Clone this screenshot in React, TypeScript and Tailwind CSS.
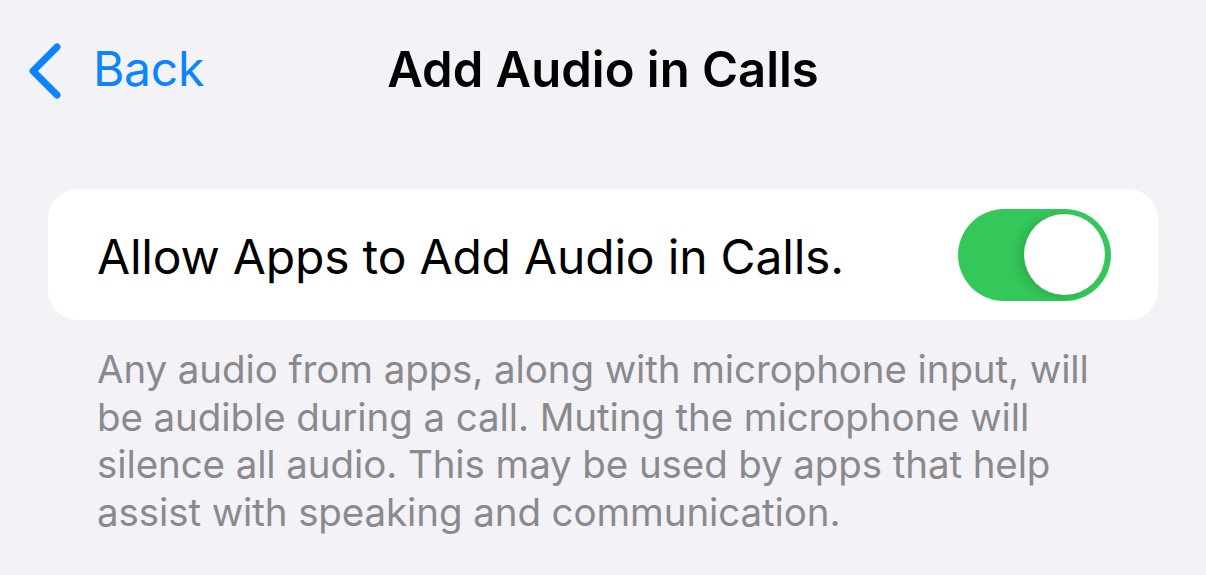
export default function App() {
    return (
        <div
            className="w-[1206px] h-[575px] bg-[#f2f2f7] overflow-hidden"
            style={{ fontFamily: 'Inter, "Noto Sans", sans-serif' }}
        >
            {/* Nav bar */}
            <div className="grid grid-cols-[1fr_auto_1fr] items-center h-[140px] pb-[2px]">
                <div className="flex items-center pl-[27px] text-[#0a84ff]">
                    <svg width="36" height="56" viewBox="0 0 36 56" fill="none" className="mt-[3px]">
                        <path
                            d="M30 4 L6 28 L30 52"
                            stroke="currentColor"
                            strokeWidth="7"
                            strokeLinecap="round"
                            strokeLinejoin="round"
                        />
                    </svg>
                    <span className="ml-[30px] text-[48px] leading-none tracking-[-0.3px]">Back</span>
                </div>
                <h1 className="text-[49px] leading-none font-semibold text-black tracking-[0px]">
                    Add Audio in Calls
                </h1>
                <div />
            </div>

            {/* Content */}
            <div className="px-[48px] pt-[49px]">
                <div className="bg-white rounded-[30px] h-[131px] flex items-center justify-between pl-[49px] pr-[47px]">
                    <span className="text-[48px] leading-none text-black tracking-[-0.2px] pt-[4px]">
                        Allow Apps to Add Audio in Calls.
                    </span>
                    {/* Toggle */}
                    <div className="w-[153px] h-[92px] rounded-full bg-[#34c759] flex items-center justify-end pr-[6px]">
                        <div className="w-[81px] h-[81px] rounded-full bg-white shadow-[-6px_2px_10px_rgba(0,0,0,0.12)]" />
                    </div>
                </div>

                <p className="pl-[49px] pt-[26px] text-[38.5px] leading-[47.5px] text-[#8a8a8e] tracking-[-0.1px]">
                    Any audio from apps, along with microphone input, will
                    <br />
                    be audible during a call. Muting the microphone will
                    <br />
                    silence all audio. This may be used by apps that help
                    <br />
                    assist with speaking and communication.
                </p>
            </div>
        </div>
    );
}
